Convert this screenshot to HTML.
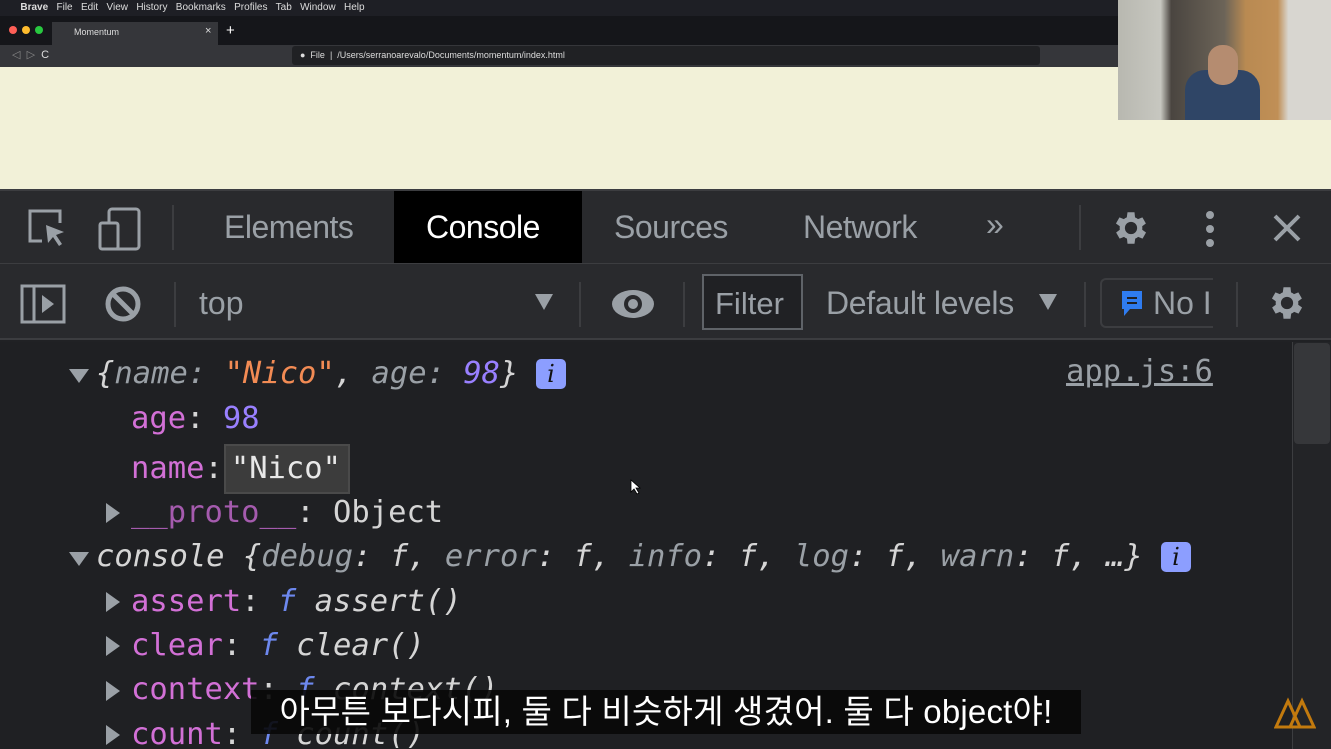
<!DOCTYPE html>
<html><head><meta charset="utf-8"><style>
*{margin:0;padding:0;box-sizing:border-box}
html,body{width:1331px;height:749px;overflow:hidden}
body{background:#202124;font-family:"Liberation Sans",sans-serif;position:relative}
.abs{position:absolute}
.mono{font-family:"DejaVu Sans Mono","Liberation Mono",monospace;font-size:30.5px;white-space:pre;line-height:44px}
.it{font-style:italic}
.k{color:#d270d6}.g{color:#9aa0a6}.w{color:#d5d5d5}.o{color:#f28b54}.p{color:#9980ff}.f{color:#6d88ee}
.tri{position:absolute;width:0;height:0}
.tdown{border-left:10px solid transparent;border-right:10px solid transparent;border-top:14px solid #9aa0a6}
.tright{border-top:10px solid transparent;border-bottom:10px solid transparent;border-left:14px solid #9aa0a6}
.info{position:absolute;width:30px;height:30px;background:#8c9eff;border-radius:5px;color:#111;font:italic 24px "DejaVu Serif",serif;text-align:center;line-height:30px}
.tab{position:absolute;top:209px;font-size:32px;letter-spacing:-0.5px}
</style></head><body>
<div class="abs" style="left:0;top:0;width:1331px;height:16px;background:#1e1f25"></div>
<div class="abs" style="left:12px;top:1px;font-size:10px;color:#ddd;white-space:pre"><span style="font-size:11px"></span>   <b>Brave</b>   File   Edit   View   History   Bookmarks   Profiles   Tab   Window   Help</div>
<div class="abs" style="left:0;top:16px;width:1331px;height:29px;background:#15161a"></div>
<div class="abs" style="left:9px;top:26px;width:8px;height:8px;border-radius:50%;background:#fe5f57"></div>
<div class="abs" style="left:22px;top:26px;width:8px;height:8px;border-radius:50%;background:#febc2e"></div>
<div class="abs" style="left:35px;top:26px;width:8px;height:8px;border-radius:50%;background:#28c840"></div>
<div class="abs" style="left:52px;top:22px;width:166px;height:23px;background:#35363a"></div>
<div class="abs" style="left:74px;top:27px;font-size:9px;color:#ddd">Momentum</div>
<div class="abs" style="left:205px;top:25px;font-size:11px;color:#ddd">×</div>
<div class="abs" style="left:226px;top:22px;font-size:15px;color:#fff">+</div>
<div class="abs" style="left:0;top:45px;width:1331px;height:22px;background:#35363a"></div>
<div class="abs" style="left:12px;top:48px;font-size:11px;color:#888">◁ &nbsp;▷ &nbsp;<span style="color:#ddd">C</span></div>
<div class="abs" style="left:292px;top:46px;width:748px;height:19px;background:#202124;border-radius:3px"></div>
<div class="abs" style="left:300px;top:50px;font-size:9px;color:#ddd;white-space:pre">●  File  |  /Users/serranoarevalo/Documents/momentum/index.html</div>
<div class="abs" style="left:0;top:67px;width:1331px;height:122px;background:#f2f1d8"></div>
<div class="abs" style="left:1118px;top:0;width:213px;height:120px;background:linear-gradient(90deg,#b8b8b0 0,#c7c7c0 20%,#4a4540 25%,#6c6458 50%,#b98a52 60%,#c08f56 75%,#d8d6d0 80%)"></div>
<div class="abs" style="left:1185px;top:70px;width:75px;height:50px;background:#2f4566;border-radius:20px 20px 0 0"></div>
<div class="abs" style="left:1208px;top:45px;width:30px;height:40px;background:#b58c70;border-radius:14px"></div>
<div class="abs" style="left:0;top:189px;width:1331px;height:75px;background:#292a2d;border-top:2px solid #3c3d40;border-bottom:1px solid #3c3d40"></div>
<div class="abs" style="left:394px;top:191px;width:188px;height:72px;background:#000"></div>
<svg class="abs" style="left:24px;top:205px" width="125" height="48"><path d="M18 36H6V6h30v12" stroke="#9aa0a6" stroke-width="3" fill="none"/><path d="M22 20l18 7-8 3 6 9-3 2-6-9-5 6z" fill="#9aa0a6"/><rect x="85" y="4" width="30" height="40" rx="3" stroke="#9aa0a6" stroke-width="3" fill="none"/><rect x="76" y="18" width="18" height="26" rx="2" stroke="#9aa0a6" stroke-width="3" fill="#292a2d"/></svg>
<div class="abs" style="left:172px;top:205px;width:2px;height:45px;background:#3c3d40"></div>
<div class="tab" style="left:224px;color:#9aa0a6">Elements</div>
<div class="tab" style="left:426px;color:#fff">Console</div>
<div class="tab" style="left:614px;color:#9aa0a6">Sources</div>
<div class="tab" style="left:803px;color:#9aa0a6">Network</div>
<div class="abs" style="top:206px;left:986px;font-size:32px;color:#9aa0a6">»</div>
<div class="abs" style="left:1079px;top:205px;width:2px;height:45px;background:#3c3d40"></div>
<svg class="abs" style="left:1110px;top:207px" width="42" height="42" viewBox="0 0 24 24"><path fill="#9aa0a6" d="M19.4 13a7.5 7.5 0 000-2l2.1-1.6-2-3.5-2.5 1a7 7 0 00-1.7-1L15 3h-4l-.4 2.9a7 7 0 00-1.7 1l-2.5-1-2 3.5L6.6 11a7.5 7.5 0 000 2l-2.1 1.6 2 3.5 2.5-1a7 7 0 001.7 1L11 21h4l.4-2.9a7 7 0 001.7-1l2.5 1 2-3.5zM13 15.5a3.5 3.5 0 110-7 3.5 3.5 0 010 7z" transform="translate(-1 0)"/></svg>
<div class="abs" style="left:1206px;top:211px;width:8px;height:8px;border-radius:50%;background:#9aa0a6;box-shadow:0 14px 0 #9aa0a6,0 28px 0 #9aa0a6"></div>
<svg class="abs" style="left:1272px;top:213px" width="30" height="30"><path d="M3 3l24 24M27 3L3 27" stroke="#9aa0a6" stroke-width="4"/></svg>
<div class="abs" style="left:0;top:264px;width:1331px;height:76px;background:#292a2d;border-bottom:2px solid #3c3d40"></div>
<svg class="abs" style="left:20px;top:284px" width="46" height="40"><rect x="2" y="2" width="42" height="36" stroke="#9aa0a6" stroke-width="3" fill="none"/><path d="M14 2v36" stroke="#9aa0a6" stroke-width="3"/><path d="M22 11l12 9-12 9z" fill="#9aa0a6"/></svg>
<svg class="abs" style="left:104px;top:285px" width="38" height="38"><circle cx="19" cy="19" r="15" stroke="#9aa0a6" stroke-width="5" fill="none"/><path d="M9 9l20 20" stroke="#9aa0a6" stroke-width="5"/></svg>
<div class="abs" style="left:174px;top:282px;width:2px;height:45px;background:#3c3d40"></div>
<div class="abs" style="top:285px;left:199px;font-size:32px;color:#9aa0a6">top</div>
<div class="tri" style="left:535px;top:294px;border-left:9px solid transparent;border-right:9px solid transparent;border-top:16px solid #9aa0a6"></div>
<div class="abs" style="left:579px;top:282px;width:2px;height:45px;background:#3c3d40"></div>
<svg class="abs" style="left:610px;top:288px" width="46" height="32"><ellipse cx="23" cy="16" rx="21" ry="14" fill="#9aa0a6"/><circle cx="23" cy="16" r="9" fill="#292a2d"/><circle cx="23" cy="16" r="5" fill="#9aa0a6"/></svg>
<div class="abs" style="left:683px;top:282px;width:2px;height:45px;background:#3c3d40"></div>
<div class="abs" style="left:702px;top:274px;width:101px;height:56px;border:2px solid #5f6368;background:#202124"></div>
<div class="abs" style="top:286px;left:715px;font-size:31px;color:#9aa0a6">Filter</div>
<div class="abs" style="top:285px;left:826px;font-size:32px;color:#9aa0a6;letter-spacing:-0.3px">Default levels</div>
<div class="tri" style="left:1039px;top:294px;border-left:9px solid transparent;border-right:9px solid transparent;border-top:16px solid #9aa0a6"></div>
<div class="abs" style="left:1084px;top:282px;width:2px;height:45px;background:#3c3d40"></div>
<div class="abs" style="left:1100px;top:278px;width:113px;height:50px;border:2px solid #3c3d40;border-right:none;border-radius:6px 0 0 6px"></div>
<svg class="abs" style="left:1119px;top:289px" width="26" height="30"><path d="M3 2h20v18H11l-6 7v-7H3z" fill="#2f7cf0"/><path d="M8 9h10M8 14h10" stroke="#202124" stroke-width="2"/></svg>
<div class="abs" style="top:285px;left:1153px;font-size:32px;color:#9aa0a6">No I</div>
<div class="abs" style="left:1236px;top:282px;width:2px;height:45px;background:#3c3d40"></div>
<svg class="abs" style="left:1266px;top:282px" width="42" height="42" viewBox="0 0 24 24"><path fill="#9aa0a6" d="M19.4 13a7.5 7.5 0 000-2l2.1-1.6-2-3.5-2.5 1a7 7 0 00-1.7-1L15 3h-4l-.4 2.9a7 7 0 00-1.7 1l-2.5-1-2 3.5L6.6 11a7.5 7.5 0 000 2l-2.1 1.6 2 3.5 2.5-1a7 7 0 001.7 1L11 21h4l.4-2.9a7 7 0 001.7-1l2.5 1 2-3.5zM13 15.5a3.5 3.5 0 110-7 3.5 3.5 0 010 7z" transform="translate(-1 0)"/></svg>
<div class="abs" style="left:0;top:342px;width:1292px;height:407px;background:#1f2023"></div>
<div class="abs" style="left:1292px;top:342px;width:39px;height:407px;background:#232427;border-left:1px solid #3c3d40"></div>
<div class="abs" style="left:1294px;top:343px;width:36px;height:101px;background:#36373a;border-radius:4px"></div>

<div class="tri tdown" style="left:69px;top:369px"></div>
<div class="abs mono it" style="left:96px;top:352px"><span class="w">{</span><span class="g">name: </span><span class="o">"Nico"</span><span class="w">, </span><span class="g">age: </span><span class="p">98</span><span class="w">}</span></div>
<div class="info" style="left:536px;top:359px">i</div>
<div class="abs mono g" style="left:1066px;top:350px;text-decoration:underline">app.js:6</div>
<div class="abs mono" style="left:131px;top:397px"><span class="k">age</span><span class="w">: </span><span class="p">98</span></div>
<div class="abs" style="left:224px;top:444px;width:126px;height:50px;background:#3c3c3c;border:2px solid #4a4a4a"></div>
<div class="abs mono" style="left:131px;top:447px"><span class="k">name</span><span class="w">:</span><span style="color:#e8e8e8;margin-left:8px">"Nico"</span></div>
<svg class="abs" style="left:630px;top:479px" width="12" height="16"><path d="M1 1v12l3-3 3 5 2-1-3-5h4z" fill="#fff" stroke="#000" stroke-width=".8"/></svg>
<div class="tri tright" style="left:106px;top:503px"></div>
<div class="abs mono" style="left:131px;top:491px"><span style="color:#a55bae">__proto__</span><span class="w">: Object</span></div>
<div class="tri tdown" style="left:69px;top:552px"></div>
<div class="abs mono it" style="left:96px;top:535px"><span class="w">console {</span><span class="g">debug</span><span class="w">: f, </span><span class="g">error</span><span class="w">: f, </span><span class="g">info</span><span class="w">: f, </span><span class="g">log</span><span class="w">: f, </span><span class="g">warn</span><span class="w">: f, …}</span></div>
<div class="info" style="left:1161px;top:542px">i</div>
<div class="tri tright" style="left:106px;top:592px"></div>
<div class="abs mono" style="left:131px;top:580px"><span class="k">assert</span><span class="w">: </span><span class="f it">f</span><span class="w it"> assert()</span></div>
<div class="tri tright" style="left:106px;top:636px"></div>
<div class="abs mono" style="left:131px;top:624px"><span class="k">clear</span><span class="w">: </span><span class="f it">f</span><span class="w it"> clear()</span></div>
<div class="tri tright" style="left:106px;top:681px"></div>
<div class="abs mono" style="left:131px;top:668px"><span class="k">context</span><span class="w">: </span><span class="f it">f</span><span class="w it"> context()</span></div>
<div class="tri tright" style="left:106px;top:725px"></div>
<div class="abs mono" style="left:131px;top:713px"><span class="k">count</span><span class="w">: </span><span class="f it">f</span><span class="w it"> count()</span></div>
<div class="abs" style="left:251px;top:690px;width:830px;height:44px;background:rgba(8,8,8,.9)"></div>
<div class="abs" style="left:251px;top:690px;width:830px;height:44px;line-height:44px;text-align:center;color:#fff;font-size:33px;font-family:'Liberation Sans','Noto Sans CJK KR',sans-serif;white-space:nowrap;letter-spacing:0.2px">아무튼 보다시피, 둘 다 비슷하게 생겼어. 둘 다 object야!</div>
<svg class="abs" style="left:1274px;top:697px" width="42" height="32"><path d="M2 30L14 4l12 26zM16 30L28 4l12 26z" stroke="#c27a0e" stroke-width="3" fill="none"/></svg>
</body></html>
